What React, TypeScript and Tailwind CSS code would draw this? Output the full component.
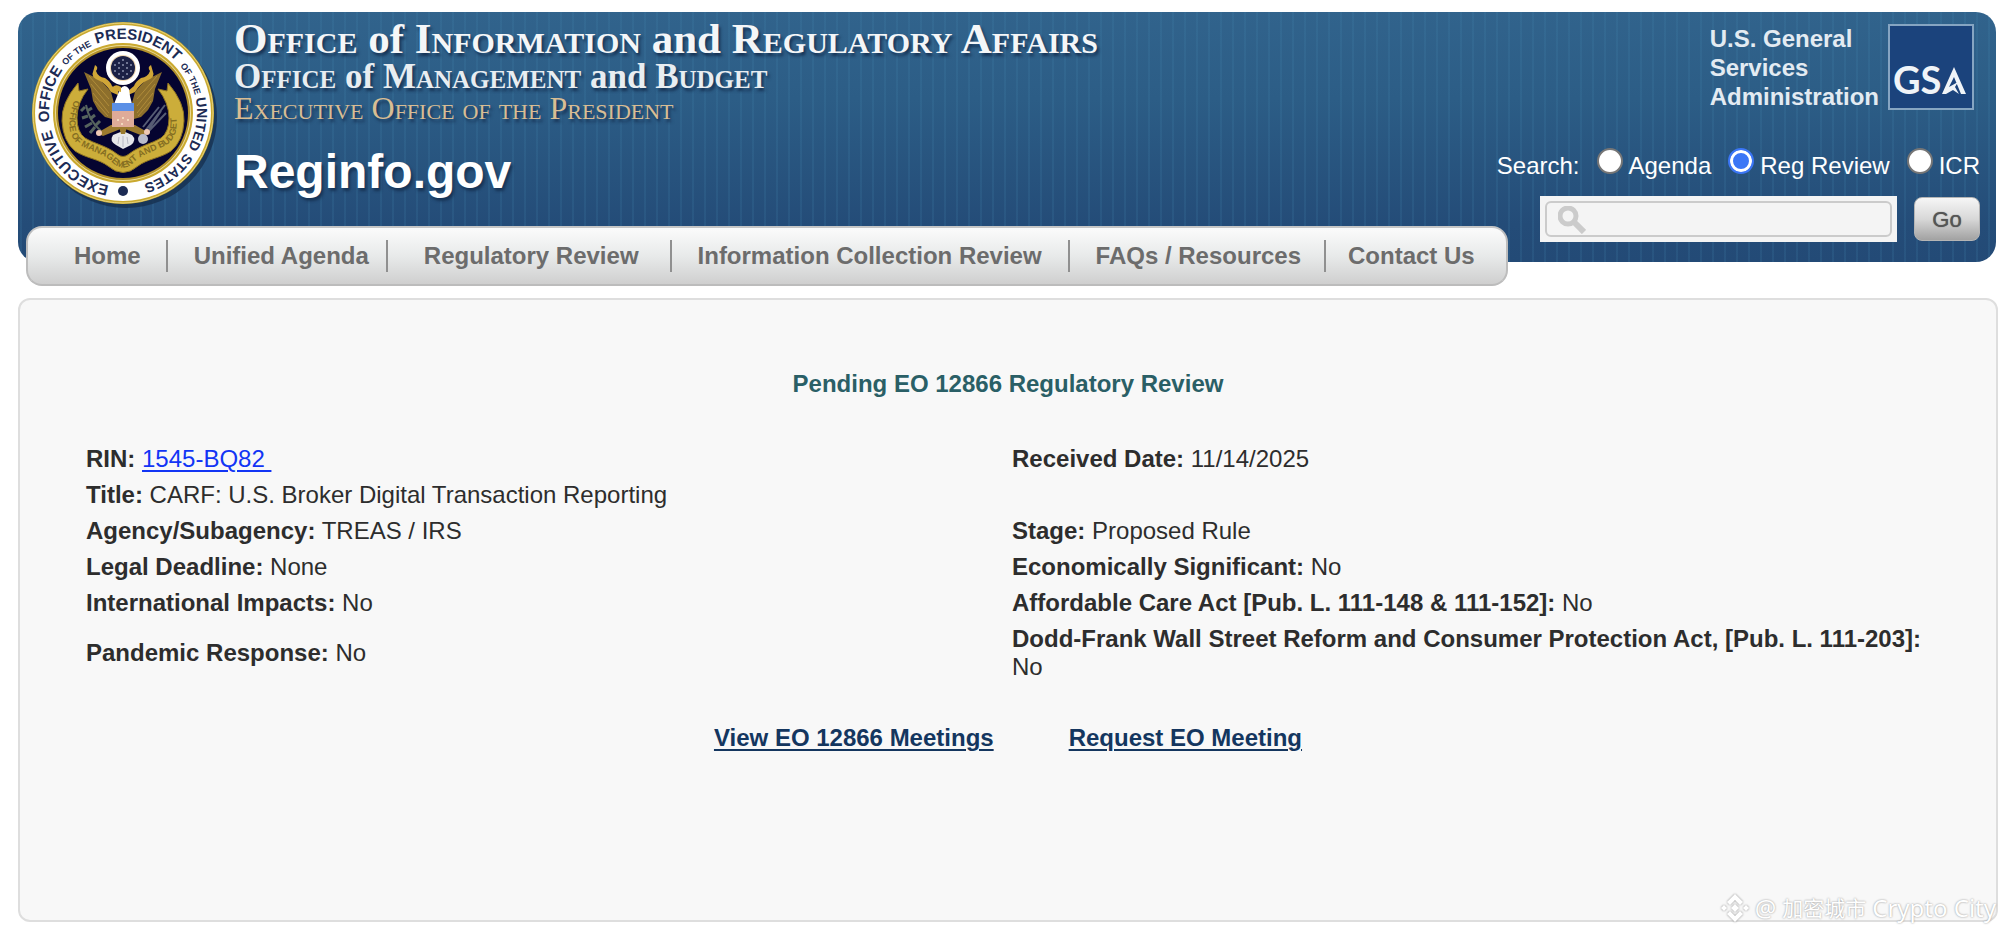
import { ReactNode } from "react";

const navItems = [
  { label: "Home", className: "pl-[46px] pr-[25px]" },
  { label: "Unified Agenda", className: "pl-[26px] pr-[17px]" },
  { label: "Regulatory Review", className: "pl-9 pr-[31px]" },
  { label: "Information Collection Review", className: "px-[26px]" },
  { label: "FAQs / Resources", className: "pl-[26px] pr-[23px]" },
  { label: "Contact Us", className: "pl-[22px] pr-[31px]" },
];

const searchTypes = [
  { id: "agenda", label: "Agenda" },
  { id: "regreview", label: "Reg Review" },
  { id: "icr", label: "ICR" },
];

const stars = [
  [0, -8], [-4, -5], [4, -5], [-8, -3], [0, -3], [8, -3], [-4, 0], [4, 0],
  [-8, 3], [0, 3], [8, 3], [-4, 6], [4, 6], [0, 9],
];

// Words around the rim, offsets are measured from the bottom of the ring
const rimWords = [
  { text: "EXECUTIVE", offset: 14, size: 15 },
  { text: "OFFICE", offset: 107, size: 15 },
  { text: "OF THE", offset: 167, size: 9 },
  { text: "PRESIDENT", offset: 205, size: 15 },
  { text: "OF THE", offset: 297, size: 9 },
  { text: "UNITED", offset: 333, size: 14 },
  { text: "STATES", offset: 390, size: 14 },
];

function Wing() {
  return (
    <g>
      <path d="M-39 -41 L-31 -37 L-24 -34 L-18 -28 L-12 -21 L-9 -10 L-11 6 L-18 4 L-25 -3 L-30 -12 L-32 -24 Z" fill="#8d6f2c" />
      <path d="M-34 -37 L-14 -14 M-32 -29 L-14 -7 M-30 -20 L-14 0 M-28 -12 L-15 3" stroke="#b08c3a" strokeWidth="1" />
      <path d="M-28 -48 Q-24 -46 -27 -42 Q-25 -36 -18 -35 Q-13 -32 -11 -27 L-5 -22 L-5 -18 L-12 -21 Q-17 -29 -23 -32 Q-33 -36 -30 -41 Z" fill="#d0a637" />
    </g>
  );
}

function Seal() {
  return (
    <svg viewBox="-96 -96 192 192" className="h-48 w-48 shrink-0" role="img" aria-label="Seal of the Executive Office of the President">
      <defs>
        <path id="rim" d="M0 74 A74 74 0 0 1 0 -74 A74 74 0 0 1 0 74" />
        <path id="ribbon" d="M-48 -15 C-56 6 -56 22 -45 31 C-34 38 -18 41 -10 50 Q0 59 10 50 C18 41 34 38 45 31 C56 22 56 6 48 -15" />
      </defs>
      <circle cx="3" cy="4" r="91" fill="#152d4c" opacity="0.75" />
      <circle r="91" fill="#c9a92f" />
      <circle r="90" fill="none" stroke="#e6d27c" strokeWidth="1" />
      <circle r="88" fill="#fff" />
      <circle r="70" fill="#caa92f" />
      <circle r="68" fill="#ecdc97" />
      <circle r="67" fill="#b2912b" />
      <circle r="65" fill="#050430" />
      <g fill="#1c2b54" fontWeight="700" fontFamily="'Liberation Sans', Arial, sans-serif">
        {rimWords.map((word) => (
          <text key={word.offset} fontSize={word.size}>
            <textPath href="#rim" startOffset={word.offset}>
              {word.text}
            </textPath>
          </text>
        ))}
      </g>
      <circle cy="78" r="5" fill="#1c2b54" />

      {/* Ribbon */}
      <path
        d="M-45 -30 L-44 -22 L-35 -24 Q-46 -10 -46 5 Q-46 19 -38 25 C-28 31 -16 33 -6 41 Q0 46 6 41 C16 33 28 31 38 25 Q46 19 46 5 Q46 -10 35 -24 L44 -22 L45 -30 Q62 -10 61 8 Q60 28 48 38 C38 45 24 46 15 53 Q0 66 -15 53 C-24 46 -38 45 -48 38 Q-60 28 -61 8 Q-62 -10 -45 -30 Z"
        fill="#ccad3a"
        stroke="#8f7321"
        strokeWidth="1"
      />
      <text fontSize="9" fontWeight="700" fill="#846d22" fontFamily="'Liberation Sans', Arial, sans-serif">
        <textPath href="#ribbon" startOffset="2">
          OFFICE OF MANAGEMENT AND BUDGET
        </textPath>
      </text>

      {/* Eagle */}
      <Wing />
      <g transform="scale(-1 1)">
        <Wing />
      </g>
      <g stroke="#56645e" strokeWidth="2" fill="none">
        <path d="M-22 18 Q-34 8 -37 -8" />
        <path d="M-38 -6 L-42 -2 M-36 -2 L-31 -5 M-35 3 L-41 5 M-33 6 L-28 2 M-31 10 L-38 14 M-28 13 L-23 8 M-28 14 L-33 20" strokeWidth="3" />
      </g>
      <path d="M22 18 L42 -8 M24 20 L43 0 M20 14 L36 -6 M26 16 L38 -2" stroke="#565c74" strokeWidth="2" />
      <path d="M-12 12 L-26 20 L-20 23 L0 15 L20 23 L26 20 L12 12 Z" fill="#9b7a2e" />
      <circle cx="-24" cy="20" r="3" fill="#efc9b4" />
      <circle cx="24" cy="19" r="3" fill="#efc9b4" />
      <ellipse cx="20" cy="26" rx="5" ry="5" fill="#b9bccb" />
      <path d="M-10 22 Q-14 28 -7 32 L0 36 L8 32 Q14 27 9 22 L0 18 Z" fill="#e6e6ea" />
      <path d="M-4 24 L-5 31 M0 23 L0 34 M4 24 L5 31" stroke="#b8b8c4" strokeWidth="1" />
      <path d="M-4 14 L4 14 L2 21 L-2 21 Z" fill="#9b7a2e" />
      <path d="M-9 -9 L-3 -24 Q2 -30 6 -24 L7 -17 L9 -9 Z" fill="#fff" />
      <path d="M-2 -26 Q-8 -30 -11 -25 L-6 -22 L-2 -21 Z" fill="#d0a637" />
      <rect x="-11" y="-10" width="22" height="8" fill="#5c90e6" />
      <rect x="-11" y="-2" width="22" height="16" fill="#deab98" />
      <g fill="#f7e9c8">
        <circle cx="-5" cy="7" r="1" />
        <circle cx="0" cy="5" r="1" />
        <circle cx="5" cy="7" r="1" />
        <circle cx="-1" cy="11" r="1" />
      </g>

      {/* Stars */}
      <circle cy="-45" r="17" fill="#fff" />
      <circle cy="-45" r="13" fill="#f0d7b2" />
      <circle cy="-45" r="12" fill="#1b2045" />
      <g fill="#8b90ac">
        {stars.map(([x, y]) => (
          <circle key={`${x}-${y}`} cx={x} cy={y - 45} r="1" />
        ))}
      </g>
    </svg>
  );
}

function GsaLogo() {
  return (
    <svg viewBox="0 0 86 86" className="h-[86px] w-[86px]" role="img" aria-label="GSA">
      <rect x="1" y="1" width="84" height="84" fill="#1b437c" stroke="#86a5c2" strokeWidth="2" />
      <text x="5" y="70" fontSize="38" fontWeight="700" fill="#f0f4f8" fontFamily="Lato, sans-serif">
        GS
      </text>
      <path d="M54 70 L66 43 L78 70 L73 70 L66 53 L61 63 L70 58 L67 63 L71 70 L65 66 L58 70 Z" fill="#f0f4f8" />
    </svg>
  );
}

function Field({ label, children }: { label: string; children: ReactNode }) {
  return (
    <>
      <b>{label}:</b> {children}
    </>
  );
}

function SearchForm() {
  return (
    <form className="flex flex-col items-end gap-4" onSubmit={(e) => e.preventDefault()}>
      <fieldset className="flex gap-[17px] text-2xl leading-7 text-white">
        <span className="pt-1">Search:</span>
        {searchTypes.map((type) => (
          <label key={type.id} className="flex items-start gap-1.5">
            <input
              type="radio"
              name="searchType"
              value={type.id}
              defaultChecked={type.id === "regreview"}
              className="h-[26px] w-[26px] appearance-none rounded-full border-2 border-[#767676] bg-white checked:border-[#3b76f6] checked:bg-[#3b76f6] checked:shadow-[inset_0_0_0_3px_white]"
            />
            <span className="pt-1">{type.label}</span>
          </label>
        ))}
      </fieldset>
      <div className="flex items-center gap-[17px]">
        <div className="relative bg-[#f4f4f4] p-[5px]">
          <svg viewBox="0 0 28 28" className="absolute top-[10px] left-[18px] h-7 w-7" fill="none" stroke="#cbcbcb">
            <circle cx="10" cy="10" r="8" strokeWidth="5" />
            <path d="M15 15 L26 26" strokeWidth="6" />
          </svg>
          <input
            type="text"
            aria-label="Search"
            className="block h-9 w-[347px] rounded-md border-2 border-[#cbcbcb] bg-transparent pl-12 text-xl outline-none"
          />
        </div>
        <button
          type="submit"
          className="h-11 w-[66px] rounded-lg border border-[#b5b5b5] bg-linear-to-b from-[#f6f6f6] via-[#d8d8d8] to-[#a2a2a2] text-[22px] text-[#555] [text-shadow:0_0_1px_#555]"
        >
          Go
        </button>
      </div>
    </form>
  );
}

function Header() {
  return (
    <header className="mr-0.5 flex min-h-[250px] justify-between rounded-[20px] bg-[repeating-linear-gradient(90deg,transparent_0_2px,rgba(70,140,180,0.16)_2px_4px,transparent_4px_12px),linear-gradient(180deg,#31638c_0%,#2c5d86_35%,#244c78_85%,#234a76_100%)] pr-4 pl-[9px]">
      <div className="flex gap-[15px]">
        <div className="pt-[5px]">
          <Seal />
        </div>
        <div className="pt-[5px] font-['Liberation_Serif',serif] [text-shadow:2px_3px_3px_#173355]">
          <p className="text-[43px] leading-[44px] font-bold text-[#f4f6f8] [font-variant-caps:small-caps]">
            Office <span className="[font-variant-caps:normal]">of</span> Information{" "}
            <span className="[font-variant-caps:normal]">and</span> Regulatory Affairs
          </p>
          <p className="text-[35px] leading-8 font-bold text-[#e8edf1] [font-variant-caps:small-caps]">
            Office <span className="[font-variant-caps:normal]">of</span> Management{" "}
            <span className="[font-variant-caps:normal]">and</span> Budget
          </p>
          <p className="text-[32px] leading-[30px] text-[#d8bd94] [font-variant-caps:small-caps]">
            Executive Office of the President
          </p>
          <p className="mt-5 font-['Liberation_Sans',Arial,sans-serif] text-5xl leading-[58px] font-bold text-white">
            Reginfo.gov
          </p>
        </div>
      </div>
      <div className="flex flex-col items-end gap-[37px] pt-3">
        <div className="flex gap-[9px] pr-1.5">
          <p className="text-2xl leading-[29px] font-bold text-[#e3ebf2]">
            U.S. General
            <br />
            Services
            <br />
            Administration
          </p>
          <GsaLogo />
        </div>
        <SearchForm />
      </div>
    </header>
  );
}

function Nav() {
  return (
    <nav className="relative -mt-9 ml-2 flex h-[60px] w-fit items-center rounded-2xl border-2 border-t-[#c6c6c6] border-r-[#bdbdbd] border-b-[#bcbcbc] border-l-[#bdbdbd] bg-linear-to-b from-[#fbfbfb] via-[#e8eaea] to-[#cfcfcf] text-2xl leading-8 font-bold text-[#6c6c6c]">
      {navItems.map((item) => (
        <a key={item.label} href="#" className={`border-l-2 border-[#909090] first:border-l-0 ${item.className}`}>
          {item.label}
        </a>
      ))}
    </nav>
  );
}

function Watermark() {
  return (
    <div className="absolute right-0 -bottom-1 flex items-center gap-1.5 font-['Noto_Sans','Noto_Sans_CJK_SC',sans-serif] text-2xl leading-8 text-white [text-shadow:0_0_2px_#888]">
      <svg viewBox="0 0 28 28" className="h-7 w-7 drop-shadow-[0_0_1px_#888]" fill="#fff">
        <path d="M14 0 L22 8 L19 11 L14 6 L9 11 L6 8 Z" />
        <path d="M14 28 L22 20 L19 17 L14 22 L9 17 L6 20 Z" />
        <path d="M3 11 L6 14 L3 17 L0 14 Z" />
        <path d="M25 11 L28 14 L25 17 L22 14 Z" />
        <path d="M14 10 L18 14 L14 18 L10 14 Z" />
      </svg>
      <span>@</span>
      <span className="text-[21px]">加密城市</span>
      <span>Crypto City</span>
    </div>
  );
}

export default function App() {
  return (
    <div className="min-h-screen bg-white py-3 pr-4 pl-[18px] font-['Liberation_Sans',Arial,sans-serif]">
      <Header />
      <Nav />
      <main className="relative mt-3 rounded-xl border-2 border-[#dedede] bg-[#f8f8f8] px-[66px] pt-[70px] pb-[168px] text-2xl leading-7 text-[#2d2d2d]">
        <h1 className="text-center font-bold text-[#2a5f66]">Pending EO 12866 Regulatory Review</h1>
        <table className="mt-[43px] w-[calc(100%+8px)] table-fixed text-left">
          <tbody className="[&_td]:py-1">
            <tr>
              <td>
                <Field label="RIN">
                  <a href="#" className="whitespace-pre text-[#1235f5] underline decoration-2 underline-offset-3">
                    {"1545-BQ82 "}
                  </a>
                </Field>
              </td>
              <td>
                <Field label="Received Date">11/14/2025</Field>
              </td>
            </tr>
            <tr>
              <td colSpan={2}>
                <Field label="Title">CARF: U.S. Broker Digital Transaction Reporting</Field>
              </td>
            </tr>
            <tr>
              <td>
                <Field label="Agency/Subagency">TREAS / IRS</Field>
              </td>
              <td>
                <Field label="Stage">Proposed Rule</Field>
              </td>
            </tr>
            <tr>
              <td>
                <Field label="Legal Deadline">None</Field>
              </td>
              <td>
                <Field label="Economically Significant">No</Field>
              </td>
            </tr>
            <tr>
              <td>
                <Field label="International Impacts">No</Field>
              </td>
              <td>
                <Field label="Affordable Care Act [Pub. L. 111-148 & 111-152]">No</Field>
              </td>
            </tr>
            <tr>
              <td>
                <Field label="Pandemic Response">No</Field>
              </td>
              <td>
                <Field label="Dodd-Frank Wall Street Reform and Consumer Protection Act, [Pub. L. 111-203]">No</Field>
              </td>
            </tr>
          </tbody>
        </table>
        <div className="mt-[39px] flex justify-center gap-[75px] font-bold text-[#14365f]">
          <a href="#" className="underline decoration-2 underline-offset-3">View EO 12866 Meetings</a>
          <a href="#" className="underline decoration-2 underline-offset-3">Request EO Meeting</a>
        </div>
        <Watermark />
      </main>
    </div>
  );
}
